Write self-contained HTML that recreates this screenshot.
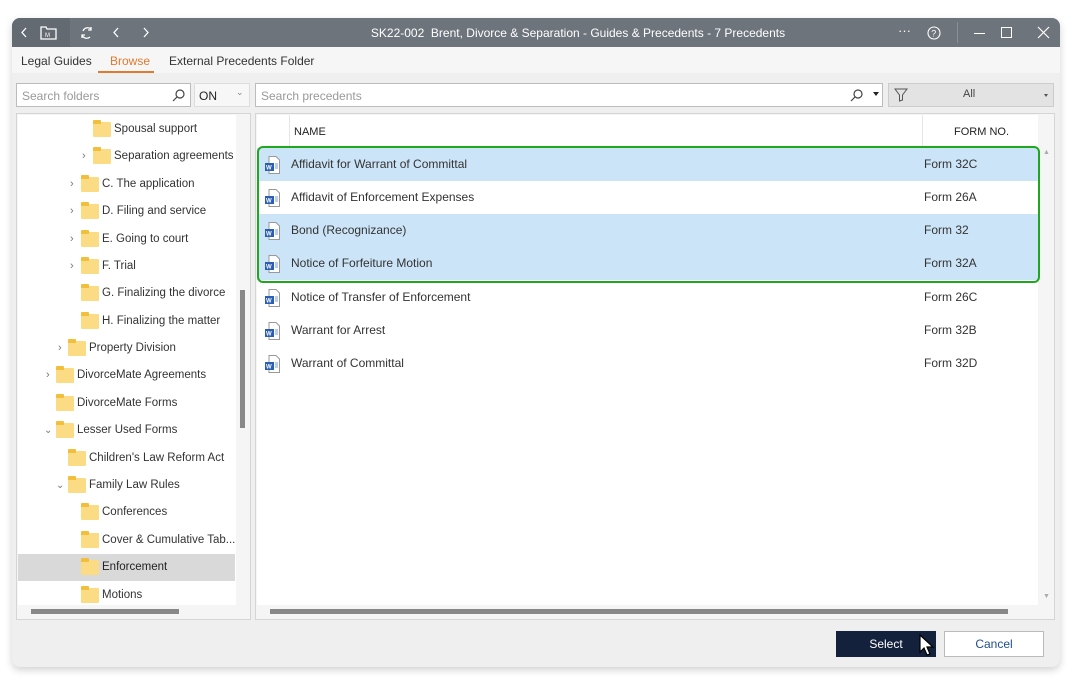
<!DOCTYPE html>
<html><head><meta charset="utf-8"><style>
*{box-sizing:border-box;margin:0;padding:0}
body{width:1076px;height:700px;background:#fff;font-family:"Liberation Sans",sans-serif;font-size:12px;color:#333;position:relative;overflow:hidden}
.a{position:absolute}
.win{left:12px;top:18px;width:1048px;height:649px;border-radius:8px;background:#efefef;box-shadow:0 3px 8px rgba(0,0,0,.18);overflow:hidden}
.tb{left:0;top:0;width:1048px;height:29px;background:#6d747c;color:#fff}
.tabs{left:0;top:29px;width:1048px;height:26px;background:#f6f6f6}
.t{position:absolute;top:7px;font-size:12px;color:#333}
.inp{background:#fff;border:1px solid #bcbcbc;height:24px;color:#999;font-size:12px;padding:5px 5px}
.row{position:absolute;left:0;height:27px;line-height:27px;font-size:11.5px;color:#333;white-space:nowrap}
.fd{position:absolute;top:6px;width:18px;height:15px;background:#fbdc84;border-radius:1px}
.fd:before{content:"";position:absolute;left:0;top:-2px;width:8px;height:4px;background:#f2bf3c;border-radius:1px 1px 0 0}
.ch{position:absolute;top:0;color:#777;font-size:11px}
.pr{position:absolute;left:0;width:781px;height:33px;line-height:33px;font-size:12px;color:#333}
.pr .n{position:absolute;left:34px}
.pr .f{position:absolute;left:667px}
.wd{position:absolute;left:7px;top:8px;width:16px;height:18px}
.sel{background:#cce4f7}
</style></head><body>
<div class="a win">
 <div class="a tb">
  <div class="a" style="left:0;top:0;width:58px;height:29px;background:#636a72"></div>
  <svg class="a" style="left:0;top:0" width="150" height="29" fill="none" stroke="#fff" stroke-width="1.3">
   <path d="M14 10l-4 4.5 4 4.5"/>
   <path d="M29 9h5l1 2h9v10H29z"/><text x="33" y="19" font-size="6" fill="#fff" stroke="none" font-family="Liberation Sans">M</text>
   <path d="M79 11a5 5 0 0 0-8 2M70 17a5 5 0 0 0 8 2"/><path d="M79 9v3h-3M70 20v-3h3"/>
   <path d="M106 10l-4 4.5 4 4.5M132 10l4 4.5-4 4.5"/>
  </svg>
  <div class="a" style="left:0;width:1048px;top:8px;text-align:center;font-size:12px;color:#fff;padding-left:84px">SK22-002&nbsp; Brent, Divorce &amp; Separation - Guides &amp; Precedents - 7 Precedents</div>
  <div class="a" style="left:886px;top:5px;font-size:13px">···</div>
  <svg class="a" style="left:914px;top:7px" width="16" height="16" fill="none" stroke="#fff" stroke-width="1.1"><circle cx="8" cy="8" r="6"/><text x="5.3" y="11.5" font-size="9" fill="#fff" stroke="none" font-family="Liberation Sans">?</text></svg>
  <div class="a" style="left:945px;top:4px;width:1px;height:21px;background:#8a9098"></div>
  <div class="a" style="left:962px;top:15px;width:11px;height:1px;background:#fff"></div>
  <div class="a" style="left:989px;top:9px;width:11px;height:11px;border:1px solid #fff"></div>
  <svg class="a" style="left:1025px;top:8px" width="13" height="13" stroke="#fff" stroke-width="1.2"><path d="M1 1l11 11M12 1L1 12"/></svg>
 </div>
 <div class="a tabs">
  <div class="t" style="left:9px">Legal Guides</div>
  <div class="t" style="left:98px;color:#e07a2e">Browse</div>
  <div class="a" style="left:86px;top:24px;width:56px;height:2px;background:#e07a2e"></div>
  <div class="t" style="left:157px">External Precedents Folder</div>
 </div>
</div>
<div class="a inp" style="left:16px;top:83px;width:175px">Search folders</div>
<svg class="a" style="left:172px;top:88px" width="14" height="14" fill="none" stroke="#444" stroke-width="1.2"><circle cx="8" cy="6" r="4"/><path d="M5 9l-4 4"/></svg>
<div class="a" style="left:194px;top:83px;width:56px;height:24px;background:#f7f7f7;border:1px solid #ddd;font-size:12px;color:#222;padding:5px 4px">ON</div>
<div class="a" style="left:236px;top:87px;font-size:9px;color:#888">⌄</div>
<div class="a inp" style="left:255px;top:83px;width:628px">Search precedents</div>
<svg class="a" style="left:850px;top:88px" width="14" height="14" fill="none" stroke="#444" stroke-width="1.2"><circle cx="8" cy="6" r="4"/><path d="M5 9l-4 4"/></svg>
<div class="a" style="left:873px;top:92px;width:0;height:0;border-left:3px solid transparent;border-right:3px solid transparent;border-top:4px solid #222"></div>
<div class="a" style="left:888px;top:83px;width:166px;height:24px;background:#e3e3e3;border:1px solid #ccc"></div>
<svg class="a" style="left:893px;top:87px" width="16" height="16" fill="none" stroke="#555" stroke-width="1"><path d="M2 2h12L9.5 8v5l-3 1V8z"/></svg>
<div class="a" style="left:963px;top:88px;font-size:11px;color:#444">All</div>
<div class="a" style="left:1044px;top:94px;width:0;height:0;border-left:2px solid transparent;border-right:2px solid transparent;border-top:3px solid #555"></div>
<div class="a" style="left:16px;top:113px;width:235px;height:507px;background:#f5f5f5;border:1px solid #d5d5d5"></div>
<div class="a" style="left:18px;top:115px;width:218px;height:490px;background:#fff;overflow:hidden">
 <div class="row" style="top:1px;left:0"><div class="fd" style="left:75px"></div><span style="position:absolute;left:96px">Spousal support</span></div>
 <div class="row" style="top:28px"><span class="ch" style="left:64px">›</span><div class="fd" style="left:75px"></div><span style="position:absolute;left:96px">Separation agreements</span></div>
 <div class="row" style="top:56px"><span class="ch" style="left:52px">›</span><div class="fd" style="left:63px"></div><span style="position:absolute;left:84px">C. The application</span></div>
 <div class="row" style="top:83px"><span class="ch" style="left:52px">›</span><div class="fd" style="left:63px"></div><span style="position:absolute;left:84px">D. Filing and service</span></div>
 <div class="row" style="top:111px"><span class="ch" style="left:52px">›</span><div class="fd" style="left:63px"></div><span style="position:absolute;left:84px">E. Going to court</span></div>
 <div class="row" style="top:138px"><span class="ch" style="left:52px">›</span><div class="fd" style="left:63px"></div><span style="position:absolute;left:84px">F. Trial</span></div>
 <div class="row" style="top:165px"><div class="fd" style="left:63px"></div><span style="position:absolute;left:84px">G. Finalizing the divorce</span></div>
 <div class="row" style="top:193px"><div class="fd" style="left:63px"></div><span style="position:absolute;left:84px">H. Finalizing the matter</span></div>
 <div class="row" style="top:220px"><span class="ch" style="left:40px">›</span><div class="fd" style="left:50px"></div><span style="position:absolute;left:71px">Property Division</span></div>
 <div class="row" style="top:247px"><span class="ch" style="left:28px">›</span><div class="fd" style="left:38px"></div><span style="position:absolute;left:59px">DivorceMate Agreements</span></div>
 <div class="row" style="top:275px"><div class="fd" style="left:38px"></div><span style="position:absolute;left:59px">DivorceMate Forms</span></div>
 <div class="row" style="top:302px"><span class="ch" style="left:26px;font-size:10px">⌄</span><div class="fd" style="left:38px"></div><span style="position:absolute;left:59px">Lesser Used Forms</span></div>
 <div class="row" style="top:330px"><div class="fd" style="left:50px"></div><span style="position:absolute;left:71px">Children's Law Reform Act</span></div>
 <div class="row" style="top:357px"><span class="ch" style="left:38px;font-size:10px">⌄</span><div class="fd" style="left:50px"></div><span style="position:absolute;left:71px">Family Law Rules</span></div>
 <div class="row" style="top:384px"><div class="fd" style="left:63px"></div><span style="position:absolute;left:84px">Conferences</span></div>
 <div class="row" style="top:412px"><div class="fd" style="left:63px"></div><span style="position:absolute;left:84px">Cover &amp; Cumulative Tab...</span></div>
 <div class="row" style="top:439px;width:217px;background:#d9d9d9"><div class="fd" style="left:63px"></div><span style="position:absolute;left:84px;color:#222">Enforcement</span></div>
 <div class="row" style="top:467px"><div class="fd" style="left:63px"></div><span style="position:absolute;left:84px">Motions</span></div>
</div>
<div class="a" style="left:240px;top:290px;width:5px;height:138px;background:#888"></div>
<div class="a" style="left:31px;top:609px;width:148px;height:5px;background:#888"></div>
<div class="a" style="left:255px;top:113px;width:800px;height:507px;background:#f5f5f5;border:1px solid #d5d5d5"></div>
<div class="a" style="left:257px;top:115px;width:781px;height:490px;background:#fff"></div>
<div class="a" style="left:289px;top:115px;width:1px;height:32px;background:#e6e6e6"></div>
<div class="a" style="left:922px;top:115px;width:1px;height:32px;background:#e6e6e6"></div>
<div class="a" style="left:294px;top:126px;font-size:11px;color:#222">NAME</div>
<div class="a" style="left:954px;top:126px;font-size:11px;color:#222">FORM NO.</div>
<div class="a" style="left:1043px;top:149px;font-size:7px;color:#aaa">▲</div>
<div class="a" style="left:1043px;top:593px;font-size:7px;color:#aaa">▼</div>
<div class="a" style="left:257px;top:148px;width:781px;height:240px">
 <div class="pr sel" style="top:0"><svg class="wd" viewBox="0 0 16 18"><path d="M5 .5h7l3.5 3.5v13.5H5z" fill="#fff" stroke="#999"/><rect x="1" y="7" width="9" height="8" fill="#2b5eb5"/><text x="2" y="13.5" font-size="6" fill="#fff" font-family="Liberation Sans" font-weight="bold">W</text><path d="M11 8h3M11 10h3M11 12h3" stroke="#7aa2dc"/></svg><span class="n">Affidavit for Warrant of Committal</span><span class="f">Form 32C</span></div>
 <div class="pr" style="top:33px"><svg class="wd" viewBox="0 0 16 18"><path d="M5 .5h7l3.5 3.5v13.5H5z" fill="#fff" stroke="#999"/><rect x="1" y="7" width="9" height="8" fill="#2b5eb5"/><text x="2" y="13.5" font-size="6" fill="#fff" font-family="Liberation Sans" font-weight="bold">W</text><path d="M11 8h3M11 10h3M11 12h3" stroke="#7aa2dc"/></svg><span class="n">Affidavit of Enforcement Expenses</span><span class="f">Form 26A</span></div>
 <div class="pr sel" style="top:66px"><svg class="wd" viewBox="0 0 16 18"><path d="M5 .5h7l3.5 3.5v13.5H5z" fill="#fff" stroke="#999"/><rect x="1" y="7" width="9" height="8" fill="#2b5eb5"/><text x="2" y="13.5" font-size="6" fill="#fff" font-family="Liberation Sans" font-weight="bold">W</text><path d="M11 8h3M11 10h3M11 12h3" stroke="#7aa2dc"/></svg><span class="n">Bond (Recognizance)</span><span class="f">Form 32</span></div>
 <div class="pr sel" style="top:99px"><svg class="wd" viewBox="0 0 16 18"><path d="M5 .5h7l3.5 3.5v13.5H5z" fill="#fff" stroke="#999"/><rect x="1" y="7" width="9" height="8" fill="#2b5eb5"/><text x="2" y="13.5" font-size="6" fill="#fff" font-family="Liberation Sans" font-weight="bold">W</text><path d="M11 8h3M11 10h3M11 12h3" stroke="#7aa2dc"/></svg><span class="n">Notice of Forfeiture Motion</span><span class="f">Form 32A</span></div>
 <div class="pr" style="top:133px"><svg class="wd" viewBox="0 0 16 18"><path d="M5 .5h7l3.5 3.5v13.5H5z" fill="#fff" stroke="#999"/><rect x="1" y="7" width="9" height="8" fill="#2b5eb5"/><text x="2" y="13.5" font-size="6" fill="#fff" font-family="Liberation Sans" font-weight="bold">W</text><path d="M11 8h3M11 10h3M11 12h3" stroke="#7aa2dc"/></svg><span class="n">Notice of Transfer of Enforcement</span><span class="f">Form 26C</span></div>
 <div class="pr" style="top:166px"><svg class="wd" viewBox="0 0 16 18"><path d="M5 .5h7l3.5 3.5v13.5H5z" fill="#fff" stroke="#999"/><rect x="1" y="7" width="9" height="8" fill="#2b5eb5"/><text x="2" y="13.5" font-size="6" fill="#fff" font-family="Liberation Sans" font-weight="bold">W</text><path d="M11 8h3M11 10h3M11 12h3" stroke="#7aa2dc"/></svg><span class="n">Warrant for Arrest</span><span class="f">Form 32B</span></div>
 <div class="pr" style="top:199px"><svg class="wd" viewBox="0 0 16 18"><path d="M5 .5h7l3.5 3.5v13.5H5z" fill="#fff" stroke="#999"/><rect x="1" y="7" width="9" height="8" fill="#2b5eb5"/><text x="2" y="13.5" font-size="6" fill="#fff" font-family="Liberation Sans" font-weight="bold">W</text><path d="M11 8h3M11 10h3M11 12h3" stroke="#7aa2dc"/></svg><span class="n">Warrant of Committal</span><span class="f">Form 32D</span></div>
</div>
<div class="a" style="left:257px;top:146px;width:783px;height:137px;border:2px solid #1fa81f;border-radius:6px"></div>
<div class="a" style="left:270px;top:609px;width:738px;height:5px;background:#888"></div>
<div class="a" style="left:836px;top:631px;width:100px;height:26px;background:#14213d;color:#fff;text-align:center;line-height:26px;font-size:12px">Select</div>
<svg class="a" style="left:918px;top:634px" width="18" height="24"><path d="M2 1v17l4-4 3 7 3-1-3-7h6z" fill="#fff" stroke="#000" stroke-width="1.2"/></svg>
<div class="a" style="left:944px;top:631px;width:100px;height:26px;background:#fff;border:1px solid #bbb;color:#1f4e8c;text-align:center;line-height:24px;font-size:12px">Cancel</div>
</body></html>
